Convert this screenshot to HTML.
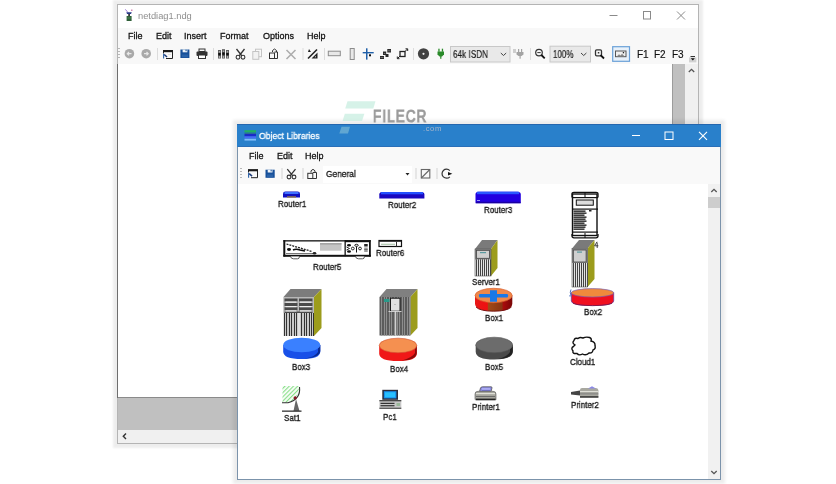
<!DOCTYPE html>
<html><head><meta charset="utf-8">
<style>
*{box-sizing:border-box}
html,body{margin:0;padding:0;width:836px;height:484px;overflow:hidden;background:#fff;font-family:"Liberation Sans",sans-serif;color:#000}
.a{position:absolute}
.t{position:absolute;white-space:pre;line-height:1;will-change:transform}
svg{position:absolute;overflow:visible}
#main{left:117px;top:4px;width:582px;height:440px;border:1px solid #b4b4b4;background:#fff;box-shadow:0 0 2px 4px rgba(0,0,0,.07)}
#ol{left:237px;top:124px;width:484px;height:356px;border:1px solid #7b93ab;background:#fff;box-shadow:0 0 3px 4px rgba(0,0,0,.075)}
.menu{font-size:9px;color:#111;-webkit-text-stroke:0.28px #111}
.lbl{font-size:9.6px;color:#1a1a1a;-webkit-text-stroke:0.35px #1a1a1a;transform:scaleX(0.83);margin-top:-0.5px;transform-origin:0 0}
</style></head><body>

<!-- ============ MAIN WINDOW ============ -->
<div id="main" class="a">
</div>
<!-- title bar -->
<div class="t" style="left:138px;top:12px;font-size:9.3px;color:#8f8f8f">netdiag1.ndg</div>
<!-- menu + toolbar bg -->
<div class="a" style="left:118px;top:28px;width:580px;height:36px;background:#f8f8f8"></div>
<div class="t menu" style="left:128px;top:32px">File</div>
<div class="t menu" style="left:156px;top:32px">Edit</div>
<div class="t menu" style="left:184px;top:32px">Insert</div>
<div class="t menu" style="left:220px;top:32px">Format</div>
<div class="t menu" style="left:263px;top:32px">Options</div>
<div class="t menu" style="left:307px;top:32px">Help</div>

<!-- canvas -->
<div class="a" style="left:117px;top:64px;width:1px;height:334px;background:#6e6e6e"></div>
<div class="a" style="left:118px;top:397px;width:567px;height:1px;background:#8a8a8a"></div>
<div class="a" style="left:118px;top:398px;width:567px;height:32px;background:#c0c0c0"></div>
<div class="a" style="left:672px;top:64px;width:13px;height:333px;background:#c0c0c0;border-left:1px solid #9c9c9c"></div>
<!-- v scrollbar -->
<div class="a" style="left:685px;top:64px;width:13px;height:366px;background:#f0f0f0"></div>
<!-- h scrollbar -->
<div class="a" style="left:118px;top:430px;width:567px;height:13px;background:#f0f0f0"></div>

<!-- main toolbar icons -->
<svg class="a" style="left:0;top:0" width="836" height="484" viewBox="0 0 836 484">
<!-- title icon -->
<path d="M125.3 9.3 L127.8 12.3" stroke="#9a70d8" stroke-width="0.9"/>
<rect x="131.2" y="9.6" width="1.2" height="1.2" fill="#c04a8a"/>
<path d="M126.3 12.3 H131.8 L131 14 H127 Z" fill="#283a88"/>
<rect x="128.2" y="14" width="1.8" height="2" fill="#3a3a3a"/>
<path d="M126.6 16 H131.6 V21 H126.6 Z" fill="#2f5f38"/>
<rect x="127.3" y="17.5" width="3.6" height="1" fill="#4a8a55"/>
<!-- window buttons -->
<line x1="609.5" y1="15.5" x2="617.5" y2="15.5" stroke="#8a8a8a" stroke-width="1"/>
<rect x="643.5" y="11.5" width="7" height="7.5" fill="none" stroke="#8a8a8a" stroke-width="1"/>
<path d="M677 11.5 L685 19.5 M685 11.5 L677 19.5" stroke="#8a8a8a" stroke-width="1"/>
<!-- grip -->
<g fill="#b8b8b8"><rect x="118" y="48" width="2" height="1"/><rect x="118" y="51" width="2" height="1"/><rect x="118" y="54" width="2" height="1"/><rect x="118" y="57" width="2" height="1"/></g>
<!-- back/fwd -->
<circle cx="129.4" cy="53.7" r="4.8" fill="#a9a9a9"/>
<path d="M131.5 53.7 H127.5 M129 52 L127.3 53.7 L129 55.4" stroke="#e8e8e8" stroke-width="1.2" fill="none"/>
<circle cx="146.2" cy="53.7" r="4.8" fill="#a9a9a9"/>
<path d="M144 53.7 H148 M146.5 52 L148.2 53.7 L146.5 55.4" stroke="#e8e8e8" stroke-width="1.2" fill="none"/>
<!-- separators -->
<g fill="#dcdcdc">
<rect x="157" y="48" width="1" height="12"/>
<rect x="213" y="48" width="1" height="12"/>
<rect x="302.5" y="48" width="1" height="12"/>
<rect x="324" y="48" width="1" height="12"/>
<rect x="413" y="48" width="1" height="12"/>
<rect x="530" y="48" width="1" height="12"/>
</g>
<!-- new window -->
<rect x="163" y="50" width="10" height="2.2" fill="#1a1a1a"/>
<path d="M163.5 52 V53.5 M172.5 52 V58.5 H166" fill="none" stroke="#222" stroke-width="1"/>
<path d="M163.6 53.8 V58.6" stroke="#2a62a8" stroke-width="1.1"/>
<path d="M164.2 54.5 L167 57" stroke="#1a3a78" stroke-width="1.5"/>
<rect x="168" y="54" width="3" height="0.8" fill="#ddd"/>
<!-- save -->
<path d="M180.4 49.5 H189.4 V58 H180.4 Z" fill="#17509a"/>
<rect x="182.6" y="49.5" width="4.8" height="2.8" fill="#eef3f8"/>
<rect x="185.5" y="49.6" width="1.1" height="1.6" fill="#17509a"/>
<rect x="182" y="54.5" width="6" height="2.8" fill="#2a62a8"/>
<!-- print -->
<rect x="199" y="49" width="6" height="2.5" fill="none" stroke="#333" stroke-width="1"/>
<rect x="196.5" y="51.5" width="11" height="4.5" rx="1" fill="#333"/>
<rect x="198.5" y="55" width="7" height="3.5" fill="#fff" stroke="#333" stroke-width="1"/>
<!-- library -->
<g fill="#5a5a5a">
<rect x="218" y="50" width="3" height="8.5"/><rect x="222" y="49.2" width="3" height="9.3"/><rect x="226" y="50" width="3" height="8.5"/>
</g>
<g fill="#aaa"><rect x="218.8" y="51" width="1.4" height="1.6"/><rect x="222.8" y="50.5" width="1.4" height="1.6"/><rect x="226.8" y="51" width="1.4" height="1.6"/>
<rect x="218.8" y="56" width="1.4" height="2"/><rect x="222.8" y="56" width="1.4" height="2"/><rect x="226.8" y="56" width="1.4" height="2"/></g>
<g fill="#111"><rect x="218.3" y="53" width="2.4" height="2.3"/><rect x="222.3" y="52.5" width="2.4" height="2.3"/><rect x="226.3" y="53" width="2.4" height="2.3"/></g>
<!-- scissors -->
<path d="M236.5 49 L242 56 M244.5 49 L239 56" stroke="#333" stroke-width="1.3" fill="none"/>
<circle cx="238" cy="57.2" r="1.9" fill="none" stroke="#333" stroke-width="1.1"/>
<circle cx="243" cy="57.2" r="1.9" fill="none" stroke="#333" stroke-width="1.1"/>
<!-- copy (disabled) -->
<rect x="255.5" y="49.2" width="6" height="7.5" fill="none" stroke="#c4c4c4" stroke-width="1"/>
<rect x="252.8" y="51.5" width="6" height="7.8" fill="#f2f2f2" stroke="#c4c4c4" stroke-width="1"/>
<!-- paste -->
<path d="M272.5 52 V50.5 L274.5 49 L276.5 50.5 V52" fill="none" stroke="#333" stroke-width="1"/>
<rect x="269.5" y="53" width="5" height="5.5" fill="none" stroke="#333" stroke-width="1"/>
<path d="M274.5 52 H277.5 V58.5 H274.5" fill="none" stroke="#333" stroke-width="1"/>
<!-- delete -->
<path d="M286.5 50 L295.5 59 M295.5 50 L286.5 59" stroke="#adadad" stroke-width="1.6"/>
<!-- percent/no-line icon -->
<path d="M317 49.5 L308 58.5" stroke="#222" stroke-width="1.6"/>
<path d="M309 49 L311 52 L308 52 Z" fill="#222"/>
<path d="M317.5 52.5 V58.5 H311.5 Z M316 56 V57.3 H314.5 Z" fill="#222" fill-rule="evenodd"/>
<!-- rect horizontal -->
<rect x="328.3" y="51.2" width="12" height="4.5" fill="#e8e8e8" stroke="#8c8c8c" stroke-width="1"/>
<!-- rect vertical -->
<rect x="350.2" y="48.5" width="4" height="11" fill="#e8e8e8" stroke="#8c8c8c" stroke-width="1"/>
<!-- blue cross -->
<rect x="362.7" y="52" width="11" height="1.4" fill="#1f5fa8"/>
<rect x="366" y="48.3" width="1.5" height="11.3" fill="#1f5fa8"/>
<rect x="369" y="54.3" width="2" height="2" fill="#111"/>
<!-- align -->
<g fill="#2a2a2a">
<rect x="380" y="56" width="4" height="3"/>
<rect x="383" y="51.5" width="3.2" height="3.5"/>
<rect x="385.5" y="54" width="3" height="3"/>
<rect x="387.3" y="49" width="3.7" height="3.5"/>
</g>
<g fill="#8a8a8a"><rect x="380.5" y="57.2" width="3" height="0.7"/><rect x="387.8" y="50.5" width="2.7" height="0.7"/><rect x="383.8" y="53" width="1.6" height="0.7"/></g>
<!-- resize -->
<rect x="400" y="51.5" width="5" height="5" fill="none" stroke="#222" stroke-width="1.3"/>
<path d="M397.5 58.5 L400 56 M397.3 56.5 V58.7 H399.5" stroke="#222" stroke-width="1" fill="none"/>
<path d="M405 51.5 L407.5 49 M405.5 48.8 H407.7 V51" stroke="#222" stroke-width="1" fill="none"/>
<!-- dark circle -->
<circle cx="423.5" cy="53.8" r="5.6" fill="#424242"/>
<circle cx="423.5" cy="53.8" r="1.1" fill="#f0f0f0"/>
<!-- green plug -->
<rect x="438.3" y="48.7" width="1.3" height="3" fill="#2a8a2a"/>
<rect x="441.8" y="48.7" width="1.3" height="3" fill="#2a8a2a"/>
<path d="M437.5 51.5 H444 V54.5 L442 56.5 H439.5 L437.5 54.5 Z" fill="#2a8a2a"/>
<rect x="440.2" y="56" width="1.2" height="2.8" fill="#2a8a2a"/>
<!-- dropdown 64k -->
<rect x="450.5" y="46.5" width="59.5" height="15.5" fill="#e9e9e9" stroke="#c8c8c8" stroke-width="1"/>
<path d="M500.8 53 L503.5 55.5 L506.2 53" fill="none" stroke="#444" stroke-width="1"/>
<!-- gray plug/network -->
<g fill="#a3a3a3">
<rect x="513" y="49.5" width="3" height="1"/><rect x="513" y="51.5" width="3" height="1"/>
<rect x="518" y="49" width="1.2" height="3"/><rect x="521" y="49" width="1.2" height="3"/>
<path d="M516.5 52 H523.5 V54.5 L521.5 56 H518.5 L516.5 54.5 Z"/>
<rect x="519.5" y="55.5" width="1.2" height="3.2"/>
</g>
<!-- zoom out -->
<circle cx="539" cy="52.6" r="3.3" fill="none" stroke="#333" stroke-width="1.2"/>
<path d="M537.3 52.6 H540.7" stroke="#333" stroke-width="1"/>
<path d="M541.4 55 L544.7 58.4" stroke="#111" stroke-width="1.8"/>
<!-- dropdown 100% -->
<rect x="550" y="46.2" width="40.5" height="15.8" fill="#e9e9e9" stroke="#c8c8c8" stroke-width="1"/>
<path d="M581 53 L583.7 55.5 L586.4 53" fill="none" stroke="#444" stroke-width="1"/>
<!-- zoom in -->
<rect x="595.5" y="49.8" width="6" height="6" rx="1.2" fill="none" stroke="#333" stroke-width="1.3"/>
<rect x="597.8" y="52" width="1.5" height="1.5" fill="#333"/>
<path d="M600.5 55 L604 58.5" stroke="#111" stroke-width="1.8"/>
<!-- highlighted button -->
<rect x="612.7" y="46.7" width="16.8" height="14.6" fill="#e8f1fa" stroke="#6aa0d8" stroke-width="1.2"/>
<rect x="615.5" y="51" width="10.5" height="5.7" fill="#f0f0f0" stroke="#555" stroke-width="1"/>
<path d="M617 56.2 L619 54.3 L620.5 55.5 L622 53.8 L624.5 56.2 Z" fill="#888"/>
<rect x="622.8" y="52" width="1.3" height="1.3" fill="#222"/>
<!-- overflow -->
<rect x="689" y="57.4" width="7.4" height="5" fill="#d2d2d2"/>
<rect x="690.5" y="56" width="4.5" height="1" fill="#333"/>
<path d="M690.8 58.3 H694.8 L692.8 60.6 Z" fill="#111"/>
<!-- v scroll arrow -->
<path d="M688.8 72 L691.5 69.3 L694.2 72" fill="none" stroke="#555" stroke-width="1.3"/>
<!-- h scroll arrow -->
<path d="M126 433.5 L123.3 436.2 L126 438.9" fill="none" stroke="#333" stroke-width="1.4"/>
</svg>
<div class="t" style="left:453px;top:49.6px;font-size:10px;color:#1a1a1a;-webkit-text-stroke:0.2px #1a1a1a;transform:scaleX(0.82);transform-origin:0 0">64k ISDN</div>
<div class="t" style="left:552.5px;top:49.6px;font-size:10px;color:#1a1a1a;-webkit-text-stroke:0.2px #1a1a1a;transform:scaleX(0.8);transform-origin:0 0">100%</div>
<div class="t" style="left:637.3px;top:50px;font-size:10px;color:#111;-webkit-text-stroke:0.15px #111">F1</div>
<div class="t" style="left:654.3px;top:50px;font-size:10px;color:#111;-webkit-text-stroke:0.15px #111">F2</div>
<div class="t" style="left:671.5px;top:50px;font-size:10px;color:#111;-webkit-text-stroke:0.15px #111">F3</div>

<!-- ============ OBJECT LIBRARIES ============ -->
<div id="ol" class="a"></div>
<div class="a" style="left:237px;top:124px;width:484px;height:23px;background:#2980cb"></div>
<div class="a" style="left:237px;top:124px;width:484px;height:1px;background:#2466ae"></div>
<div class="a" style="left:238px;top:146px;width:482px;height:1px;background:#2a6fb8"></div>
<div class="a" style="left:238px;top:147px;width:482px;height:1px;background:#eef5fb"></div>
<div class="t" style="left:258.5px;top:131.5px;font-size:9.3px;color:#fff;-webkit-text-stroke:0.3px #fff;transform:scaleX(0.93);transform-origin:0 0">Object Libraries</div>
<div class="a" style="left:238px;top:147px;width:482px;height:37px;background:#f9f9f9"></div>
<div class="t menu" style="left:248.5px;top:151.5px">File</div>
<div class="t menu" style="left:276.5px;top:151.5px">Edit</div>
<div class="t menu" style="left:305px;top:151.5px">Help</div>
<div class="a" style="left:323px;top:166px;width:89px;height:17px;background:#fff"></div>
<div class="t menu" style="left:326px;top:169.5px;font-size:9.3px;transform:scaleX(0.9);transform-origin:0 0">General</div>
<!-- OL scrollbar -->
<div class="a" style="left:708px;top:184px;width:12px;height:295px;background:#f1f1f1"></div>
<div class="a" style="left:708px;top:196.5px;width:12px;height:11.8px;background:#cdcdcd"></div>

<svg class="a" style="left:0;top:0" width="836" height="484" viewBox="0 0 836 484">
<!-- title icon -->
<rect x="244.5" y="130.2" width="11.5" height="2.4" fill="#22b060"/>
<rect x="244.5" y="132.6" width="11.5" height="1.4" fill="#2a6a9a"/>
<rect x="244.5" y="134" width="11.5" height="2.4" fill="#1a2ac8"/>
<rect x="244.5" y="136.4" width="11.5" height="2" fill="#4a68f8"/>
<rect x="244.5" y="138.8" width="11.5" height="1.8" fill="#80bcf8"/>
<!-- title buttons -->
<rect x="632" y="135" width="8" height="1" fill="#fff"/>
<rect x="665" y="132" width="8" height="7.5" fill="none" stroke="#fff" stroke-width="1"/>
<path d="M699 131.8 L707 139.8 M707 131.8 L699 139.8" stroke="#fff" stroke-width="1.1"/>
<!-- grip -->
<g fill="#b8b8b8"><rect x="240" y="168" width="2" height="1"/><rect x="240" y="171" width="2" height="1"/><rect x="240" y="174" width="2" height="1"/><rect x="240" y="177" width="2" height="1"/></g>
<!-- new -->
<rect x="248" y="169.1" width="10" height="2.2" fill="#1a1a1a"/>
<path d="M248.5 171 V172.5 M257.5 171 V177.7 H251" fill="none" stroke="#222" stroke-width="1"/>
<path d="M248.6 172.8 V177.8" stroke="#2a62a8" stroke-width="1.1"/>
<path d="M249.2 173.6 L252 176.1" stroke="#1a3a78" stroke-width="1.5"/>
<!-- save -->
<path d="M265.5 169.7 H274.7 V177.8 H265.5 Z" fill="#17509a"/>
<rect x="267.7" y="169.7" width="4.8" height="2.8" fill="#eef3f8"/>
<rect x="270.6" y="169.8" width="1.1" height="1.6" fill="#17509a"/>
<rect x="267" y="174.5" width="6" height="2.8" fill="#2a62a8"/>
<!-- seps -->
<rect x="281.5" y="168" width="1" height="11" fill="#d4d4d4"/>
<rect x="302.5" y="168" width="1" height="11" fill="#d4d4d4"/>
<rect x="415.5" y="168" width="1" height="11" fill="#d4d4d4"/>
<rect x="436.5" y="168" width="1" height="11" fill="#d4d4d4"/>
<!-- scissors -->
<path d="M287.3 169.2 L293 176.2 M295.5 169.2 L289.8 176.2" stroke="#333" stroke-width="1.3" fill="none"/>
<circle cx="289" cy="177" r="1.9" fill="none" stroke="#333" stroke-width="1.1"/>
<circle cx="294" cy="177" r="1.9" fill="none" stroke="#333" stroke-width="1.1"/>
<!-- paste -->
<path d="M311 172.5 V170.8 L313 169.3 L315 170.8 V172.5" fill="none" stroke="#333" stroke-width="1"/>
<rect x="307.8" y="173.3" width="5" height="5.2" fill="none" stroke="#333" stroke-width="1"/>
<path d="M312.8 172.5 H316.5 V178.5 H312.8" fill="none" stroke="#333" stroke-width="1"/>
<!-- dropdown arrow -->
<path d="M405.5 173 H409.5 L407.5 175.5 Z" fill="#222"/>
<!-- nofill -->
<rect x="421.3" y="169.5" width="8.5" height="8.5" fill="none" stroke="#666" stroke-width="1.1"/>
<path d="M421.3 178 L429.8 169.5" stroke="#666" stroke-width="1.1"/>
<!-- refresh -->
<path d="M449.8 170.6 A4.5 4.5 0 1 0 449.8 176.8" fill="none" stroke="#333" stroke-width="1.2"/>
<path d="M448 172 L452.3 173.8 L448 175.6 Z" fill="#111"/>
<!-- scrollbar arrows -->
<path d="M711.3 192 L714 189.3 L716.7 192" fill="none" stroke="#555" stroke-width="1.3"/>
<path d="M711.3 471 L714 473.7 L716.7 471" fill="none" stroke="#555" stroke-width="1.3"/>

<!-- Router1 -->
<path d="M283 197.6 V194 Q283 191.6 285.5 191.6 H297.5 Q300 191.6 300 194 V197.6 Z" fill="#1010c0"/>
<path d="M284.5 192 H298.5 V194 H284.5 Z" fill="#3f70ff"/>
<rect x="287" y="196.3" width="9" height="1.3" fill="#a08040"/>
<!-- Router2 -->
<path d="M379.3 198.5 V194.5 Q379.3 192 382 192 H421.5 Q424.4 192 424.4 194.5 V198.5 Z" fill="#1a08c0"/>
<rect x="381" y="192" width="42" height="2.3" fill="#2450ff"/>
<!-- Router3 -->
<path d="M475.5 203.2 V194.5 Q475.5 191.7 478.5 191.7 H517.5 Q520.8 191.7 520.8 194.5 V203.2 Z" fill="#2200e0"/>
<rect x="477" y="191.7" width="42" height="2.5" fill="#2a58ff"/>
<rect x="476" y="201.8" width="44.5" height="1.4" fill="#1a00a0"/>
<rect x="477" y="200" width="3" height="0.8" fill="#c0c0ff"/>
<!-- Router5 -->
<rect x="283.3" y="240.2" width="87.5" height="16.3" fill="#fff"/>
<rect x="283.3" y="240.2" width="87.5" height="1.3" fill="#111"/>
<rect x="283.3" y="240.2" width="2" height="16.3" fill="#111"/>
<rect x="283.3" y="254.8" width="87.5" height="2" fill="#111"/>
<rect x="369" y="240.2" width="1.8" height="16.3" fill="#111"/>
<rect x="345" y="240.2" width="25" height="2" fill="#111"/>
<rect x="344.5" y="240.2" width="1.3" height="16" fill="#111"/>
<path d="M286.5 244 L312 251.5" stroke="#222" stroke-width="1.3" stroke-dasharray="2 1"/>
<ellipse cx="289" cy="249.5" rx="2" ry="1.4" fill="#111"/>
<path d="M293 250 Q296 248.5 300 250 L305 251" stroke="#111" stroke-width="1.5" fill="none"/>
<rect x="286" y="253" width="28" height="1" fill="#777"/>
<ellipse cx="314.5" cy="253.3" rx="1.8" ry="1.2" fill="#222"/>
<rect x="320" y="243.2" width="21.5" height="7.5" fill="#c4c4c4"/>
<rect x="320" y="243.2" width="21.5" height="1.3" fill="#9a9a9a"/>
<ellipse cx="349" cy="245.3" rx="2" ry="1.3" fill="#111"/>
<ellipse cx="349" cy="251.5" rx="2" ry="1.3" fill="#111"/>
<path d="M346.5 247 L349.5 248.5 L346.5 250" stroke="#111" stroke-width="0.9" fill="none"/>
<circle cx="352.8" cy="248.5" r="1.4" fill="none" stroke="#111" stroke-width="0.9"/>
<ellipse cx="356.5" cy="245.3" rx="1.8" ry="1" fill="none" stroke="#111" stroke-width="0.9"/>
<path d="M356.5 246.5 V252.5" stroke="#111" stroke-width="1"/>
<circle cx="360" cy="248.5" r="1.4" fill="none" stroke="#111" stroke-width="0.9"/>
<rect x="364.2" y="244" width="3.5" height="2.5" fill="#222"/>
<rect x="364.2" y="247.5" width="3.5" height="4.5" fill="#999"/>
<rect x="364.2" y="249" width="3.5" height="0.7" fill="#555"/>
<path d="M290.5 256.5 Q291 258.8 293.5 258.8 H297.5 Q299.5 258.8 299.5 256.5" fill="#fff" stroke="#333" stroke-width="0.8"/>
<path d="M355.5 256.5 Q356 258.8 358.5 258.8 H362.5 Q364.5 258.8 364.5 256.5" fill="#fff" stroke="#333" stroke-width="0.8"/>
<!-- Router6 -->
<rect x="379" y="240.5" width="22.5" height="6" fill="#fff" stroke="#111" stroke-width="1.2"/>
<rect x="379" y="240" width="22.5" height="1.8" rx="0.8" fill="#111"/>
<rect x="381" y="243.8" width="14" height="0.8" fill="#8ab08a"/>
<rect x="396" y="242" width="1" height="4.5" fill="#333"/>
<!-- tall device -->
<rect x="572.5" y="194" width="24.5" height="41.5" fill="#fff" stroke="#111" stroke-width="1.4"/>
<path d="M572 197.5 V194 Q572 192.3 574 192.3 H596 Q598 192.3 598 194 V197.5" fill="none" stroke="#111" stroke-width="1.3"/>
<rect x="572" y="197" width="26" height="1.2" fill="#111"/>
<rect x="584.5" y="192.5" width="1" height="5" fill="#111"/>
<rect x="576.3" y="200" width="17" height="5.2" fill="#ddd" stroke="#111" stroke-width="1"/>
<rect x="572" y="208.5" width="26" height="1.2" fill="#111"/>
<g fill="#111"><rect x="573.5" y="210.5" width="12" height="1.3"/><rect x="573.5" y="212.5" width="13" height="1.3"/><rect x="573.5" y="214.5" width="11" height="1.3"/><rect x="573.5" y="216.5" width="13" height="1.3"/><rect x="573.5" y="218.5" width="12" height="1.3"/><rect x="573.5" y="220.5" width="13" height="1.3"/><rect x="573.5" y="222.5" width="11" height="1.3"/><rect x="573.5" y="224.5" width="13" height="1.3"/><rect x="573.5" y="226.5" width="12" height="1.3"/><rect x="573.5" y="228.5" width="11" height="1.3"/></g>
<rect x="589" y="210" width="2.5" height="1.5" fill="#222"/>
<rect x="572" y="231.5" width="26" height="1.2" fill="#111"/>
<path d="M572 234 V236 Q572 237.8 574 237.8 H596 Q598 237.8 598 236 V234" fill="none" stroke="#111" stroke-width="1.3"/>
<rect x="584.5" y="233" width="1" height="5" fill="#111"/>
</svg>

<!-- objects -->
<svg class="a" style="left:0;top:0" width="836" height="484" viewBox="0 0 836 484">
<defs>
<pattern id="stripes" width="2" height="4" patternUnits="userSpaceOnUse"><rect width="2" height="4" fill="#777"/><rect x="1" width="1" height="4" fill="#eee"/></pattern>
<pattern id="stripes2" width="2.6" height="4" patternUnits="userSpaceOnUse"><rect width="2.6" height="4" fill="#6a6a6a"/><rect x="1.6" width="0.8" height="4" fill="#999"/></pattern>
<pattern id="stripes3" width="2.45" height="4" patternUnits="userSpaceOnUse" x="283.5"><rect width="2.45" height="4" fill="#2e2e2e"/><rect x="1.1" width="1.35" height="4" fill="#d0d0d0"/></pattern>
<pattern id="hatch" width="3" height="3" patternUnits="userSpaceOnUse" patternTransform="rotate(45)"><rect width="3" height="3" fill="#fff"/><rect width="1.2" height="3" fill="#8ae08a"/></pattern>
</defs>
<!-- Server1 -->
<path d="M475 249 L482 240 H497.5 L491 249 Z" fill="#7a7a7a"/>
<path d="M491 249 L497.5 240 V268 L491 276 Z" fill="#9c9c1c"/>
<rect x="475" y="249" width="16" height="27" fill="#e4e4e4"/>
<g fill="#444"><rect x="476" y="259" width="1" height="17"/><rect x="478" y="259" width="1" height="17"/><rect x="480" y="259" width="1" height="17"/><rect x="482" y="259" width="1" height="17"/><rect x="484" y="259" width="1" height="17"/><rect x="486" y="259" width="1" height="17"/><rect x="488" y="259" width="1" height="17"/><rect x="490" y="259" width="1" height="17"/></g>
<rect x="475" y="249" width="16" height="10.5" fill="#8a8a8a"/>
<rect x="476.5" y="250.3" width="13" height="8" fill="#cfcfcf" stroke="#444" stroke-width="0.8"/>
<rect x="480" y="252" width="6" height="1.2" fill="#5a9aa0"/>
<rect x="475" y="249" width="16" height="27" fill="none" stroke="#555" stroke-width="0.6"/>
<!-- Server2 tall -->
<path d="M572 248.5 L579 240 H594.5 L587.5 248.5 Z" fill="#7a7a7a"/>
<path d="M587.5 248.5 L594.5 240 V279 L587.5 287 Z" fill="#9c9c1c"/>
<rect x="572" y="248.5" width="15.5" height="38.5" fill="#e4e4e4"/>
<g fill="#444"><rect x="573" y="263" width="1" height="24"/><rect x="575" y="263" width="1" height="24"/><rect x="577" y="263" width="1" height="24"/><rect x="579" y="263" width="1" height="24"/><rect x="581" y="263" width="1" height="24"/><rect x="583" y="263" width="1" height="24"/><rect x="585" y="263" width="1" height="24"/><rect x="587" y="263" width="1" height="24"/></g>
<rect x="572" y="248.5" width="15.5" height="14.5" fill="#8a8a8a"/>
<rect x="573.3" y="250" width="12.8" height="12" fill="#cfcfcf" stroke="#444" stroke-width="0.8"/>
<rect x="577" y="251.5" width="5" height="1.2" fill="#5a9aa0"/>
<rect x="572" y="248.5" width="15.5" height="38.5" fill="none" stroke="#555" stroke-width="0.6"/>
<path d="M597 241.8 L594.6 245.8 H598.4 M597.2 242.5 V248" stroke="#333" stroke-width="0.9" fill="none"/>
<!-- big server left -->
<path d="M283.5 297 L290.5 289 H321.5 L314 297 Z" fill="#7c7c7c"/>
<path d="M314 297 L321.5 289 V328 L314 336 Z" fill="#9c9c1c"/>
<rect x="283.5" y="297" width="30.5" height="39" fill="#c8c8c8"/>
<g fill="#333"><rect x="284" y="313" width="1" height="23"/><rect x="286" y="313" width="1" height="23"/><rect x="289" y="313" width="1" height="23"/><rect x="291" y="313" width="1" height="23"/><rect x="294" y="313" width="1" height="23"/><rect x="296" y="313" width="1" height="23"/><rect x="301" y="313" width="1" height="23"/><rect x="304" y="313" width="1" height="23"/><rect x="306" y="313" width="1" height="23"/><rect x="309" y="313" width="1" height="23"/><rect x="311" y="313" width="1" height="23"/><rect x="313" y="313" width="1" height="23"/></g>
<rect x="283.5" y="297" width="30.5" height="16" fill="#b8b8b8"/>
<g fill="#4a4a4a">
<rect x="284.5" y="298.5" width="13" height="3"/><rect x="299" y="298.5" width="13.5" height="3"/>
<rect x="284.5" y="302.8" width="13" height="3.2"/><rect x="299" y="302.8" width="13.5" height="3.2"/>
<rect x="284.5" y="307.2" width="13" height="3.2"/><rect x="299" y="307.2" width="13.5" height="3.2"/>
<rect x="284.5" y="311.5" width="28" height="1.5"/>
</g>
<g fill="#ececec"><rect x="285.5" y="301.5" width="11" height="1.3"/><rect x="300" y="301.5" width="11.5" height="1.3"/><rect x="285.5" y="306" width="11" height="1.2"/><rect x="300" y="306" width="11.5" height="1.2"/><rect x="285.5" y="310.3" width="11" height="1.2"/><rect x="300" y="310.3" width="11.5" height="1.2"/></g>
<rect x="298" y="313" width="2" height="23" fill="#e0e0e0"/>
<!-- big server right -->
<path d="M379.5 297 L386.5 289 H417.5 L410.5 297 Z" fill="#808080"/>
<path d="M410.5 297 L417.5 289 V328 L410.5 335.5 Z" fill="#9c9c1c"/>
<rect x="379.5" y="297" width="31" height="38.5" fill="#5c5c5c"/>
<g fill="#8e8e8e"><rect x="381" y="297" width="1" height="38.5"/><rect x="384" y="297" width="1" height="38.5"/><rect x="386" y="297" width="1" height="38.5"/><rect x="389" y="297" width="1" height="38.5"/><rect x="391" y="297" width="1" height="38.5"/><rect x="394" y="297" width="1" height="38.5"/><rect x="397" y="297" width="1" height="38.5"/><rect x="399" y="297" width="1" height="38.5"/><rect x="402" y="297" width="1" height="38.5"/><rect x="404" y="297" width="1" height="38.5"/><rect x="407" y="297" width="1" height="38.5"/><rect x="409" y="297" width="1" height="38.5"/></g>
<rect x="384" y="299" width="5.5" height="3" fill="#2a9a8a"/>
<rect x="390.5" y="298.2" width="9.5" height="13" fill="#e0e0e0" stroke="#1a1a1a" stroke-width="1"/>
<rect x="394.5" y="304" width="1" height="1" fill="#999"/>
<rect x="395.2" y="311" width="1" height="24.5" fill="#eee"/>
<rect x="388.5" y="311" width="13" height="0.9" fill="#ddd"/>
<!-- Box1 -->
<linearGradient id="b1side" x1="0" x2="1" y1="0" y2="0">
<stop offset="0" stop-color="#e81818"/><stop offset="0.33" stop-color="#f01010"/><stop offset="0.36" stop-color="#a04a18"/><stop offset="0.72" stop-color="#8a3412"/><stop offset="0.76" stop-color="#a80c0c"/><stop offset="1" stop-color="#7a0606"/>
</linearGradient>
<path d="M475 295.5 V303.5 Q475 311.2 493.6 311.2 Q512.3 311.2 512.3 303.5 V295.5 Z" fill="url(#b1side)"/>
<path d="M476 307 Q480 311.2 493.6 311.2 Q507 311.2 511.5 307" fill="none" stroke="#700a0a" stroke-width="0.9"/>
<ellipse cx="493.6" cy="295.5" rx="18.6" ry="7.2" fill="#f0884a" stroke="#d86030" stroke-width="0.7"/>
<path d="M479.5 294 H490 V290.2 H497 V294 H507.5 Q509 295.7 507.5 297.6 H497 V301.8 H490 V297.6 H479.5 Q478 295.7 479.5 294 Z" fill="#1a78e8"/>
<!-- Box2 -->
<path d="M571.3 292.8 V301 Q571.3 305.6 592.5 305.6 Q613.7 305.6 613.7 301 V292.8 Z" fill="#f01020" stroke="#5a3aa0" stroke-width="0.7"/>
<path d="M573 303.2 Q578 305.6 592.5 305.6 Q607 305.6 612 303.2" fill="none" stroke="#8a0a30" stroke-width="0.8"/>
<ellipse cx="592.5" cy="292.8" rx="21.2" ry="4.2" fill="#f08a3c" stroke="#7a60b0" stroke-width="0.7"/>
<path d="M571 289.5 Q569.5 292 571 295.5" stroke="#4a70c0" stroke-width="1" fill="none"/>
<rect x="569" y="295.5" width="3" height="0.8" fill="#4a70c0"/>
<!-- Box3 -->
<path d="M283.2 345 V351.5 Q283.2 359.1 301.7 359.1 Q320.3 359.1 320.3 351.5 V345 Z" fill="#1850e8"/>
<path d="M310 358 Q320.3 356 320.3 351 V345 L318 346 V352 Q315 357 305 358.5 Z" fill="#0a2a90"/>
<ellipse cx="301.7" cy="345" rx="18.5" ry="7.3" fill="#3a80ff"/>
<!-- Box4 -->
<path d="M379.2 345.5 V353.5 Q379.2 361 398 361 Q416.8 361 416.8 353.5 V345.5 Z" fill="#f01818"/>
<path d="M408 360 Q416.8 358 416.8 353 V345.5 L415 347 V353 Q412 358 402 360.5 Z" fill="#8a0a0a"/>
<ellipse cx="398" cy="345.5" rx="18.8" ry="7.3" fill="#f59050" stroke="#d05030" stroke-width="0.6"/>
<!-- Box5 -->
<path d="M475.7 345 V351.5 Q475.7 359.6 494.2 359.6 Q512.8 359.6 512.8 351.5 V345 Z" fill="#4a4a4a"/>
<path d="M503 358.5 Q512.8 356.5 512.8 351 V345 L510 347 V352 Q507 357 498 359 Z" fill="#222"/>
<ellipse cx="494.2" cy="345" rx="18.5" ry="7.8" fill="#6c6c6c" stroke="#555" stroke-width="0.6"/>
<!-- Cloud1 -->
<path d="M575 345 Q571.5 343 574 340.5 Q574.5 337.5 578 338.5 Q580 336.8 583 338 Q586 336.6 589.5 337.5 Q592 338.5 591 341 Q595.5 342 595 345.5 Q596 349 593 350 Q592.5 353.5 589 353 Q586 356 582.5 354 Q579 356 577 353.5 Q572 354 573 351 Q570.5 348 573.5 346.5 Z" fill="#fff" stroke="#111" stroke-width="1.4"/>
<!-- Sat1 -->
<path d="M282.5 386 H299 Q299 399 288 402.5 H282.5 Z" fill="url(#hatch)"/>
<path d="M299.5 387 Q301 399 288 402.8 H282" fill="none" stroke="#333" stroke-width="1.1"/>
<path d="M296 399 L299.5 411 H293.5 Z" fill="#666"/>
<circle cx="295.2" cy="397.8" r="1.6" fill="#8a1a2a"/>
<rect x="282" y="410.5" width="19.5" height="1.3" fill="#333"/>
<!-- Pc1 -->
<rect x="382.3" y="389.8" width="15.7" height="10" fill="#2a2a3a"/>
<rect x="383.8" y="391.2" width="12.6" height="7.2" fill="#1890f0"/>
<rect x="385" y="392.3" width="10.2" height="5" fill="#28c0ff"/>
<rect x="379.4" y="400.1" width="21.9" height="8.7" fill="#c8c8c8"/>
<rect x="379.4" y="400.1" width="21.9" height="1.2" fill="#3a3a3a"/>
<rect x="380.5" y="402.8" width="14" height="1.1" fill="#222"/>
<rect x="380.5" y="405.2" width="14" height="1.1" fill="#222"/>
<rect x="396.5" y="403" width="3.5" height="3" fill="#9ab89a"/>
<rect x="379.4" y="407.7" width="21.9" height="1.1" fill="#444"/>
<!-- Printer1 -->
<path d="M479.5 391.5 L480.5 388 Q481 386.8 482.5 386.8 H491 Q492.3 386.8 492 388 L491 391.5 Z" fill="#8c8ce6" stroke="#555" stroke-width="0.8"/>
<rect x="482" y="388.5" width="8" height="0.9" fill="#c8c8ff"/>
<rect x="482" y="390.2" width="8" height="0.7" fill="#6a6ac0"/>
<path d="M475 394 Q475 391.3 478 391.3 H493 Q496 391.3 496 394 V399.5 Q496 400 495 400 H476 Q475 400 475 399 Z" fill="#a6a69e" stroke="#555" stroke-width="0.6"/>
<rect x="476" y="393" width="19" height="1.2" fill="#e0e0d8"/>
<rect x="476" y="396" width="19" height="0.9" fill="#666"/>
<rect x="476" y="398.6" width="19.5" height="1.5" fill="#222"/>
<!-- Printer2 -->
<path d="M571 392 L580 390.5 V395.5 L571 394.5 Z" fill="#444"/>
<path d="M580 390 Q580 388 582 388 H596 Q598.4 388 598.4 390.5 V397.6 H580 Z" fill="#a8a8a0"/>
<path d="M588 388.5 L592 386.3 L596 388.5 Z" fill="#8a88e8"/>
<rect x="580" y="391" width="18.4" height="1" fill="#e0e0d8"/>
<rect x="580" y="393.5" width="18.4" height="0.8" fill="#777"/>
<rect x="580" y="396.3" width="18.4" height="1.3" fill="#222"/>
</svg>
<div class="t lbl" style="left:278.1px;top:199.5px">Router1</div>
<div class="t lbl" style="left:387.6px;top:200.6px">Router2</div>
<div class="t lbl" style="left:483.8px;top:205.8px">Router3</div>
<div class="t lbl" style="left:312.9px;top:262.3px">Router5</div>
<div class="t lbl" style="left:375.6px;top:248.9px">Router6</div>
<div class="t lbl" style="left:472.3px;top:277.9px">Server1</div>
<div class="t lbl" style="left:484.6px;top:313.8px">Box1</div>
<div class="t lbl" style="left:583.6px;top:307.8px">Box2</div>
<div class="t lbl" style="left:292.1px;top:362.4px">Box3</div>
<div class="t lbl" style="left:389.6px;top:364.3px">Box4</div>
<div class="t lbl" style="left:484.6px;top:362.4px">Box5</div>
<div class="t lbl" style="left:570.1px;top:357.4px">Cloud1</div>
<div class="t lbl" style="left:283.6px;top:413.2px">Sat1</div>
<div class="t lbl" style="left:383.3px;top:412px">Pc1</div>
<div class="t lbl" style="left:472.3px;top:402.8px">Printer1</div>
<div class="t lbl" style="left:571.4px;top:400.8px">Printer2</div>
<!-- watermark -->
<svg class="a" style="left:0;top:0" width="836" height="484" viewBox="0 0 836 484">
<path d="M347.5 101.3 H375.5 L373.3 108.5 H345.2 Z" fill="#c8eee0" fill-opacity="0.75"/>
<path d="M344.8 113.8 H364.3 L362.1 121 H342.6 Z" fill="#c8eee0" fill-opacity="0.75"/>
<path d="M341.5 126.8 H350 L348 133.5 H339.3 Z" fill="#c8eee0" fill-opacity="0.35"/>
</svg>
<div class="t" style="left:372.8px;top:109.1px;font-size:16.8px;color:#9a9a9a;-webkit-text-stroke:1.1px #9c9c9c;letter-spacing:1.4px;transform:scaleX(0.8);transform-origin:0 0">FILECR</div>
<div class="t" style="left:422.5px;top:124.8px;font-size:7.6px;color:#a9b6ca;letter-spacing:0.6px">.com</div>
</body></html>
